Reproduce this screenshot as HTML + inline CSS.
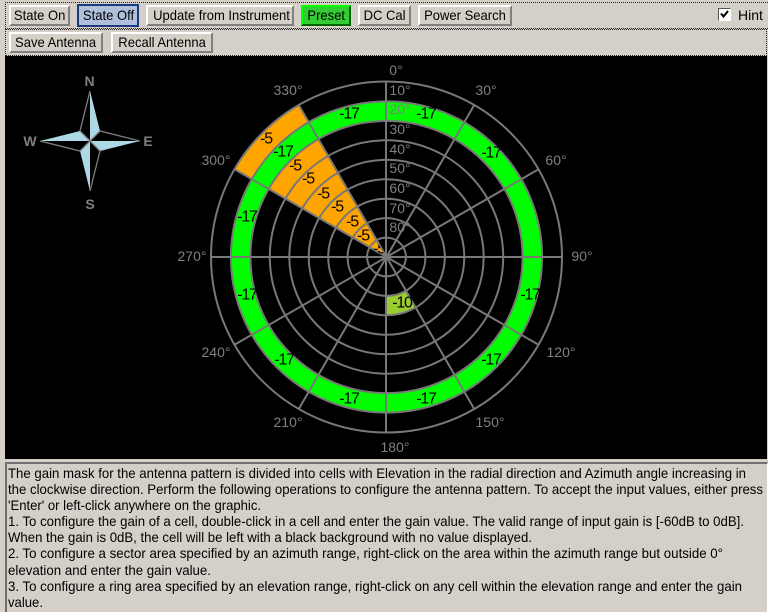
<!DOCTYPE html>
<html><head><meta charset="utf-8"><style>
html,body{margin:0;padding:0;background:#d4d0c8}
#p{position:relative;width:768px;height:612px;overflow:hidden;background:#d4d0c8;font:14px "Liberation Sans",Arial,sans-serif;color:#000}
.b{position:absolute;box-sizing:border-box;height:21px;border:2px solid;border-color:#fff #808080 #808080 #fff;background:#d4d0c8;line-height:17px;text-align:center;white-space:nowrap}
.b span{display:inline-block;transform:scaleX(.93)}
.d{position:absolute;box-sizing:border-box;border:1px dotted #222}
svg text{font:14px "Liberation Sans",Arial,sans-serif}
svg .v{font-size:16px;letter-spacing:-1.2px}
</style></head><body><div id="p">
<div class="d" style="left:5px;top:2px;width:763px;height:27px;border-right:0"></div>
<div class="d" style="left:5px;top:29px;width:762px;height:27px"></div>
<div class="b" style="left:9px;top:5px;width:61px"><span>State On</span></div>
<div class="b" style="left:77px;top:4px;width:62px;height:23px;border-color:#1c3a80;background:#b0c0dc;line-height:19px"><span>State Off</span></div>
<div class="b" style="left:146px;top:5px;width:148px"><span>Update from Instrument</span></div>
<div class="b" style="left:301px;top:5px;width:50px;border-color:#00ff00 #006400 #006400 #00ff00;background:#32cd32"><span>Preset</span></div>
<div class="b" style="left:358px;top:5px;width:53px"><span>DC Cal</span></div>
<div class="b" style="left:418px;top:5px;width:94px"><span>Power Search</span></div>
<div style="position:absolute;left:718px;top:8px;width:13px;height:13px;box-sizing:border-box;background:#fff;border:1px solid;border-color:#555 #fff #fff #555"><svg width="11" height="11" style="display:block"><path d="M2 4.5L4.5 7.5L9 2" fill="none" stroke="#000" stroke-width="2"/></svg></div>
<div style="position:absolute;left:738px;top:7px;line-height:17px">Hint</div>
<div class="b" style="left:9px;top:32px;width:94px"><span>Save Antenna</span></div>
<div class="b" style="left:111px;top:32px;width:102px"><span>Recall Antenna</span></div>

<svg style="position:absolute;left:5px;top:56px" width="762" height="403" viewBox="5 56 762 403">
<rect x="5" y="56" width="762" height="403" fill="#000"/>
<defs><clipPath id="c"><path d="M386,257L370,248A19,19 0 0 1 376,240Z"/></clipPath></defs>
<g transform="translate(.5 0)">
<path d="M386,257L268.1,189A136.1,136.1 0 0 1 318,139.1Z" fill="#ffa500"/>
<path d="M386,295.9A38.9,38.9 0 0 0 405.45,290.7L415.15,307.5A58.3,58.3 0 0 1 386,315.3Z" fill="#9acd32"/>
<path fill-rule="evenodd" fill="#00ff00" d="M386,101.4A155.6,155.6 0 1 1 385.9,101.4ZM386,120.9A136.1,136.1 0 1 0 386.1,120.9Z"/>
<path d="M234.4,169.5A175,175 0 0 1 298.5,105.4L308.2,122.3A155.6,155.6 0 0 0 251.2,179.2Z" fill="#ffa500"/>
<g fill="none" stroke="#787878" stroke-width="2">
<circle cx="386" cy="257" r="175.5"/><circle cx="386" cy="257" r="155.6"/><circle cx="386" cy="257" r="136.1"/><circle cx="386" cy="257" r="116.7"/><circle cx="386" cy="257" r="97.2"/><circle cx="386" cy="257" r="77.8"/><circle cx="386" cy="257" r="58.3"/><circle cx="386" cy="257" r="38.9"/><circle cx="386" cy="257" r="19.4"/>
<path d="M385.5,82V432M211,257H561M298.5,105.4L473.5,408.6M234.4,169.5L537.6,344.5M234.4,344.5L537.6,169.5M298.5,408.6L473.5,105.4"/>
</g>
</g>
<g fill="#808080" text-anchor="middle" dominant-baseline="central">
<text x="396" y="70">0°</text><text x="486" y="90">30°</text><text x="556" y="160">60°</text><text x="582" y="256">90°</text><text x="561" y="352">120°</text><text x="490" y="422">150°</text><text x="395" y="447">180°</text><text x="288" y="422">210°</text><text x="216" y="352">240°</text><text x="192" y="256">270°</text><text x="216" y="160">300°</text><text x="288" y="90">330°</text>
<text x="400" y="90">10°</text><text x="400" y="109">20°</text><text x="400" y="129">30°</text><text x="400" y="149">40°</text><text x="400" y="168">50°</text><text x="400" y="188">60°</text><text x="400" y="208">70°</text><text x="400" y="227">80°</text>
</g>
<g fill="#000" text-anchor="middle" dominant-baseline="central">
<text class="v" x="349" y="114">-17</text><text class="v" x="426" y="114">-17</text><text class="v" x="491" y="153">-17</text><text class="v" x="530" y="295">-17</text><text class="v" x="491" y="360">-17</text><text class="v" x="426" y="399">-17</text><text class="v" x="349" y="399">-17</text><text class="v" x="284" y="360">-17</text><text class="v" x="247" y="295">-17</text><text class="v" x="247" y="217">-17</text><text class="v" x="283" y="152">-17</text>
<text class="v" x="266" y="139">-5</text><text class="v" x="295" y="166">-5</text><text class="v" x="308" y="179">-5</text><text class="v" x="323" y="194">-5</text><text class="v" x="337" y="207">-5</text><text class="v" x="352" y="222">-5</text><text class="v" x="363" y="236">-5</text>
<text class="v" x="379" y="249" clip-path="url(#c)">-5</text>
<text class="v" x="402" y="303">-10</text>
</g>
<path d="M90,141L90,91L100,131ZM90,141L140,141L100,151ZM90,141L90,191L80,151ZM90,141L40,141L80,131Z" fill="#add8e6"/>
<path d="M90,91L80,131L90,141M140,141L100,131L90,141M90,191L100,151L90,141M40,141L80,151L90,141" fill="none" stroke="#808080" stroke-width="1.3"/>
<g fill="#808080" text-anchor="middle" dominant-baseline="central">
<text x="89.5" y="81" style="font-weight:bold">N</text><text x="148" y="141" style="font-weight:bold">E</text><text x="90" y="204" style="font-weight:bold">S</text><text x="30" y="141" style="font-weight:bold">W</text>
</g>
</svg>

<div style="position:absolute;left:5px;top:462px;width:763px;height:150px;border-left:2px solid #707070;border-top:2px solid #707070;border-right:1px solid #fff;box-sizing:border-box"></div>
<svg style="position:absolute;left:0;top:462px" width="768" height="150" viewBox="0 462 768 150">
<text x="8" y="478" textLength="738" lengthAdjust="spacingAndGlyphs">The gain mask for the antenna pattern is divided into cells with Elevation in the radial direction and Azimuth angle increasing in</text>
<text x="8" y="494" textLength="755" lengthAdjust="spacingAndGlyphs">the clockwise direction. Perform the following operations to configure the antenna pattern. To accept the input values, either press</text>
<text x="8" y="510" textLength="253" lengthAdjust="spacingAndGlyphs">'Enter' or left-click anywhere on the graphic.</text>
<text x="8" y="526" textLength="736" lengthAdjust="spacingAndGlyphs">1. To configure the gain of a cell, double-click in a cell and enter the gain value. The valid range of input gain is [-60dB to 0dB].</text>
<text x="8" y="542" textLength="524" lengthAdjust="spacingAndGlyphs">When the gain is 0dB, the cell will be left with a black background with no value displayed.</text>
<text x="8" y="558" textLength="715" lengthAdjust="spacingAndGlyphs">2. To configure a sector area specified by an azimuth range, right-click on the area within the azimuth range but outside 0°</text>
<text x="8" y="575" textLength="203" lengthAdjust="spacingAndGlyphs">elevation and enter the gain value.</text>
<text x="8" y="591" textLength="734" lengthAdjust="spacingAndGlyphs">3. To configure a ring area specified by an elevation range, right-click on any cell within the elevation range and enter the gain</text>
<text x="8" y="607" textLength="35" lengthAdjust="spacingAndGlyphs">value.</text>
</svg>
</div></body></html>
